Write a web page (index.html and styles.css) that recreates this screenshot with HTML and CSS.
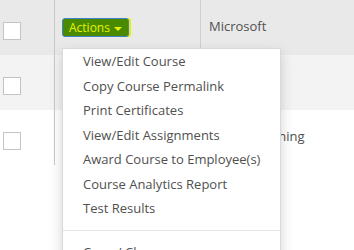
FILE: index.html
```html
<!DOCTYPE html>
<html>
<head>
<meta charset="utf-8">
<link rel="stylesheet" href="styles.css">
</head>
<body>
<div class="table">
  <div class="row row-a">
    <div class="cell cell-check"><span class="checkbox"></span></div>
    <div class="cell cell-actions">
      <div class="dropdown">
        <button class="btn btn-active">Actions <span class="caret"></span></button>
        <ul class="menu">
          <li class="item">View/Edit Course</li>
          <li class="item">Copy Course Permalink</li>
          <li class="item">Print Certificates</li>
          <li class="item">View/Edit Assignments</li>
          <li class="item">Award Course to Employee(s)</li>
          <li class="item">Course Analytics Report</li>
          <li class="item">Test Results</li>
          <li class="divider"></li>
          <li class="item">Copy / Clone</li>
        </ul>
      </div>
    </div>
    <div class="cell cell-name">Microsoft</div>
  </div>
  <div class="row row-b">
    <div class="cell cell-check"><span class="checkbox"></span></div>
    <div class="cell cell-actions"><button class="btn">Actions <span class="caret"></span></button></div>
    <div class="cell cell-name">Adobe</div>
  </div>
  <div class="row row-c">
    <div class="cell cell-check"><span class="checkbox"></span></div>
    <div class="cell cell-actions"><button class="btn">Actions <span class="caret"></span></button></div>
    <div class="cell cell-name">Privacy Training</div>
  </div>
</div>
</body>
</html>
```

FILE: styles.css
```css
html, body {
  margin: 0;
  padding: 0;
  background: #ffffff;
  font-family: "Open Sans", "Liberation Sans", sans-serif;
  font-size: 13px;
  line-height: 1.42857;
  color: #505050;
}

body {
  height: 250px;
  overflow: hidden;
}

.table {
  display: flex;
  flex-direction: column;
}

.row {
  display: grid;
  grid-template-columns: 55px 146px 1fr;
  height: 55px;
}

.row-a { background: #e9e9e9; }
.row-b { background: #f3f3f3; }
.row-c { background: #ffffff; }

.cell {
  box-sizing: border-box;
  height: 55px;
}

.cell-check {
  border-right: 1px solid #c8c8c8;
  padding: 22px 0 0 3px;
}

.checkbox {
  display: block;
  box-sizing: border-box;
  width: 18px;
  height: 18px;
  background: #ffffff;
  border: 1px solid #c4c4c4;
}

.cell-actions {
  border-right: 1px solid #cfcfcf;
  padding: 18px 0 0 7px;
}

.cell-name {
  padding: 17px 0 0 8px;
  white-space: nowrap;
  overflow: hidden;
}

.dropdown {
  position: relative;
}

.btn {
  display: block;
  box-sizing: border-box;
  height: 19px;
  margin: 0;
  padding: 0 6px 0 6px;
  white-space: nowrap;
  font-family: "Open Sans", "Liberation Sans", sans-serif;
  font-size: 12px;
  line-height: 17px;
  color: #ffffff;
  background: #337ab7;
  border: 1px solid #2e6da4;
  border-radius: 3px;
}

.btn-active {
  color: #e6f200;
  background: #4a8a00;
  border-color: #3f80cf;
  box-shadow: 2px 0 0 #e8ef00;
}

.caret {
  display: inline-block;
  width: 0;
  height: 0;
  margin-left: 1px;
  vertical-align: middle;
  border-top: 4px solid currentColor;
  border-left: 4px solid transparent;
  border-right: 4px solid transparent;
}

.menu {
  position: absolute;
  top: 30px;
  left: 0;
  z-index: 10;
  box-sizing: border-box;
  width: 219px;
  margin: 0;
  padding: 0;
  list-style: none;
  background: #ffffff;
  border: 1px solid rgba(0, 0, 0, 0.15);
  box-shadow: 0 6px 12px rgba(0, 0, 0, 0.175);
}

.item {
  padding: 3px 20px;
  white-space: nowrap;
  color: #505050;
}

.divider {
  height: 1px;
  margin: 9px 0;
  background: #e5e5e5;
}
```
